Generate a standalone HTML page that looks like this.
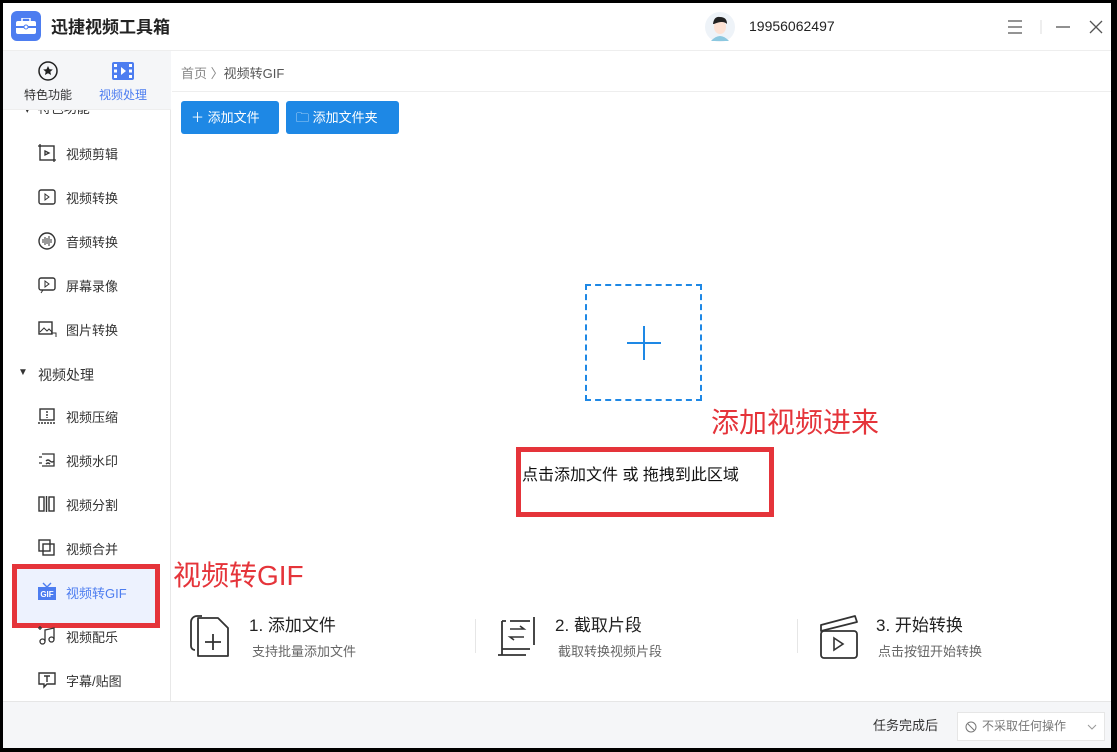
<!DOCTYPE html>
<html><head><meta charset="utf-8"><style>
*{margin:0;padding:0;box-sizing:border-box}
body{width:1117px;height:752px;background:#000;position:relative;overflow:hidden;font-family:"Liberation Sans","Noto Sans CJK SC",sans-serif;color:#333}
#app{position:absolute;left:3px;top:3px;width:1108px;height:745px;background:#fff}
.abs{position:absolute}
.nav{position:absolute;left:34px;font-size:13px;color:#333;display:flex;align-items:center}
.nav svg{position:absolute;left:0}
.nav span{position:absolute;left:29px;white-space:nowrap;top:-9px}
.red{border:5px solid #e5343a;position:absolute}
.ann{position:absolute;color:#e5343a;font-size:28px;white-space:nowrap}
</style></head><body><div id="app">
<div class="abs" style="left:8px;top:8px;width:30px;height:30px;border-radius:6px;background:#4d7df0"></div>
<svg class="abs" style="left:12px;top:15px" width="22" height="17"><rect x="1" y="3" width="20" height="13" rx="2" fill="#fff"/><rect x="7" y="0" width="8" height="4" fill="none" stroke="#fff" stroke-width="1.5"/><rect x="1" y="8" width="20" height="2" fill="#4d7df0"/><circle cx="11" cy="9" r="2" fill="#fff" stroke="#4d7df0"/></svg>
<div class="abs" style="left:48px;top:10px;font-size:17px;font-weight:bold;color:#222">迅捷视频工具箱</div>
<svg class="abs" style="left:702px;top:8px" width="30" height="32"><circle cx="15" cy="16" r="15" fill="#eef3f8"/><path d="M6 30 Q15 20 24 30Z" fill="#8cc8e0"/><ellipse cx="15" cy="16" rx="6" ry="7" fill="#fde2d4"/><path d="M8 13 Q9 5 15 6 Q22 6 22 13 Q18 9 9 13Z" fill="#222"/></svg>
<div class="abs" style="left:746px;top:15px;font-size:14px;color:#222">19956062497</div>
<svg class="abs" style="left:1003px;top:15px" width="100" height="18"><path d="M2 3H16M2 9H16M2 15H16" stroke="#555" stroke-width="1.3"/><path d="M35 2V16" stroke="#ddd"/><path d="M50 9H64" stroke="#555" stroke-width="1.3"/><path d="M84 3L96 15M96 3L84 15" stroke="#555" stroke-width="1.3"/></svg>
<div class="abs" style="left:0;top:47px;width:1108px;height:1px;background:#eee"></div>
<div class="abs" style="left:0;top:48px;width:168px;height:650px;border-right:1px solid #e8e8e8"></div>
<div class="abs" style="left:0;top:48px;width:168px;height:58px;background:#f5f6f8"></div>
<div class="abs" style="left:21px;top:106px;font-size:13px;color:#333;height:8px;overflow:hidden;line-height:0px">▾&nbsp;&nbsp;特色功能</div>
<svg class="abs" style="left:35px;top:58px" width="20" height="20"><circle cx="10" cy="10" r="9" fill="none" stroke="#222" stroke-width="1.5"/><path d="M10 5l1.5 3.2 3.3.3-2.5 2.2.8 3.3-3.1-1.8-3.1 1.8.8-3.3-2.5-2.2 3.3-.3z" fill="#222"/></svg>
<div class="abs" style="left:21px;top:83px;font-size:12px;color:#333">特色功能</div>
<svg class="abs" style="left:109px;top:59px" width="22" height="18"><rect width="22" height="18" rx="2" fill="#4d7df0"/><rect x="2" y="2" width="3" height="3" fill="#fff"/><rect x="2" y="7.5" width="3" height="3" fill="#fff"/><rect x="2" y="13" width="3" height="3" fill="#fff"/><rect x="17" y="2" width="3" height="3" fill="#fff"/><rect x="17" y="7.5" width="3" height="3" fill="#fff"/><rect x="17" y="13" width="3" height="3" fill="#fff"/><path d="M9 5l5 4-5 4z" fill="#fff"/></svg>
<div class="abs" style="left:96px;top:83px;font-size:12px;color:#4d7df0">视频处理</div>
<div class="abs" style="left:0;top:106px;width:168px;height:1px;background:#eee"></div>

<div class="nav" style="top:150px"><svg width="20" height="20"><rect x="3" y="3" width="14" height="14" fill="none" stroke="#333" stroke-width="1.4"/><path d="M1 3h3M16 17h3M3 1v3M17 16v3M8 8l4 2-4 2z" stroke="#333" stroke-width="1.3" fill="none"/></svg><span>视频剪辑</span></div>
<div class="nav" style="top:194px"><svg width="20" height="20"><rect x="2" y="3" width="16" height="14" rx="2" fill="none" stroke="#333" stroke-width="1.4"/><path d="M8 7l4 3-4 3z" fill="none" stroke="#333"/></svg><span>视频转换</span></div>
<div class="nav" style="top:238px"><svg width="20" height="20"><circle cx="10" cy="10" r="8" fill="none" stroke="#333" stroke-width="1.4"/><path d="M6 8v4M8 6v8M10 7v6M12 5v10M14 8v4" stroke="#333"/></svg><span>音频转换</span></div>
<div class="nav" style="top:282px"><svg width="20" height="20"><rect x="2" y="3" width="16" height="12" rx="2" fill="none" stroke="#333" stroke-width="1.4"/><path d="M8 6l4 3-4 3zM6 15l-2 3" stroke="#333" fill="none"/></svg><span>屏幕录像</span></div>
<div class="nav" style="top:326px"><svg width="20" height="20"><rect x="2" y="3" width="13" height="12" fill="none" stroke="#333" stroke-width="1.4"/><path d="M3 13l4-4 3 3 2-2 3 3M14 14h5v4" stroke="#333" fill="none"/></svg><span>图片转换</span></div>
<div class="abs" style="left:15px;top:364px;font-size:10px;color:#333">▼</div>
<div class="abs" style="left:35px;top:362px;font-size:14px;color:#333">视频处理</div>
<div class="nav" style="top:413px"><svg width="20" height="20"><rect x="3" y="3" width="14" height="11" fill="none" stroke="#333" stroke-width="1.4"/><path d="M1 17h18M10 5v7" stroke="#333" stroke-width="1.4" stroke-dasharray="2 1"/></svg><span>视频压缩</span></div>
<div class="nav" style="top:457px"><svg width="20" height="20"><path d="M5 4h12v12H5M2 7h3M2 13h3M9 11q2-2 4 0t4 0M9 14q2-2 4 0" stroke="#333" stroke-width="1.3" fill="none"/></svg><span>视频水印</span></div>
<div class="nav" style="top:501px"><svg width="20" height="20"><rect x="2" y="3" width="5" height="14" fill="none" stroke="#333" stroke-width="1.4"/><rect x="12" y="3" width="5" height="14" fill="none" stroke="#333" stroke-width="1.4"/><path d="M9.5 2v16" stroke="#333" stroke-width="1.4"/></svg><span>视频分割</span></div>
<div class="nav" style="top:545px"><svg width="20" height="20"><rect x="2" y="2" width="11" height="11" fill="none" stroke="#333" stroke-width="1.4"/><rect x="6" y="6" width="11" height="11" fill="none" stroke="#333" stroke-width="1.4"/></svg><span>视频合并</span></div>
<div class="abs" style="left:12px;top:563px;width:140px;height:58px;background:#edf2fe"></div>
<div class="red" style="left:9px;top:561px;width:148px;height:64px"></div>
<div class="nav" style="top:589px"><svg width="20" height="20"><path d="M6 1l4 4 4-4" stroke="#4d7df0" fill="none" stroke-width="1.4"/><rect x="1" y="5" width="18" height="13" fill="#4d7df0"/><text x="10" y="15" font-size="8" font-weight="bold" fill="#fff" text-anchor="middle" font-family="Liberation Sans">GIF</text></svg><span style="color:#4d7df0">视频转GIF</span></div>
<div class="nav" style="top:633px"><svg width="20" height="20"><path d="M8 15V4l9-2v11M1 2h4M3 0v4" stroke="#333" stroke-width="1.3" fill="none"/><circle cx="5.5" cy="15.5" r="2.5" fill="none" stroke="#333" stroke-width="1.3"/><circle cx="14.5" cy="13.5" r="2.5" fill="none" stroke="#333" stroke-width="1.3"/></svg><span>视频配乐</span></div>
<div class="nav" style="top:677px"><svg width="20" height="20"><path d="M2 3h16v11h-8l-3 3v-3H2z" stroke="#333" stroke-width="1.4" fill="none"/><path d="M7 6h6M10 6v6" stroke="#333" stroke-width="1.4"/></svg><span>字幕/贴图</span></div>

<div class="abs" style="left:178px;top:60px;font-size:13px;color:#888">首页 〉<span style="color:#555">视频转GIF</span></div>
<div class="abs" style="left:169px;top:88px;width:939px;height:1px;background:#eee"></div>
<div class="abs" style="left:178px;top:98px;width:98px;height:33px;background:#1e88e5;border-radius:3px;color:#fff;font-size:13px;line-height:33px;padding-left:10px">＋&nbsp;添加文件</div>
<div class="abs" style="left:283px;top:98px;width:113px;height:33px;background:#1e88e5;border-radius:3px;color:#fff;font-size:13px;line-height:33px;padding-left:10px">🗀&nbsp;添加文件夹</div>
<div class="abs" style="left:582px;top:281px;width:117px;height:117px;border:2px dashed #1e88e5"></div>
<svg class="abs" style="left:622px;top:321px" width="38" height="38"><path d="M19 2v34M2 19h34" stroke="#1e88e5" stroke-width="2"/></svg>
<div class="ann" style="left:708px;top:398px">添加视频进来</div>
<div class="red" style="left:513px;top:444px;width:258px;height:70px"></div>
<div class="abs" style="left:519px;top:458px;font-size:16px;color:#111">点击添加文件 或 拖拽到此区域</div>
<div class="ann" style="left:170px;top:551px">视频转GIF</div>

<svg class="abs" style="left:185px;top:607px" width="50" height="50"><path d="M14 6h-5a6 6 0 0 0-6 6v24a4 4 0 0 0 4 4" stroke="#333" stroke-width="1.8" fill="none"/><path d="M10 8h20l10 10v28H10z" stroke="#333" stroke-width="1.8" fill="none" stroke-linejoin="round"/><path d="M25 24v16M17 32h16" stroke="#333" stroke-width="1.8"/></svg>
<div class="abs" style="left:246px;top:608px;font-size:17px;color:#222">1. 添加文件</div>
<div class="abs" style="left:249px;top:638px;font-size:13px;color:#666">支持批量添加文件</div>
<div class="abs" style="left:472px;top:616px;width:1px;height:34px;background:#e6e6e6"></div>
<svg class="abs" style="left:493px;top:610px" width="46" height="46"><path d="M6 8v34M2 42h28M38 4v28M14 8h20" stroke="#333" stroke-width="1.8" fill="none"/><path d="M6 8h4M34 36H6" stroke="#333" stroke-width="1.8"/><path d="M14 16h14l-4-3M28 24H14l4 3" stroke="#333" stroke-width="1.6" fill="none"/></svg>
<div class="abs" style="left:552px;top:608px;font-size:17px;color:#222">2. 截取片段</div>
<div class="abs" style="left:555px;top:638px;font-size:13px;color:#666">截取转换视频片段</div>
<div class="abs" style="left:794px;top:616px;width:1px;height:34px;background:#e6e6e6"></div>
<svg class="abs" style="left:814px;top:610px" width="46" height="48"><path d="M4 18l36-9-2-6L4 12z" stroke="#333" stroke-width="1.8" fill="none" stroke-linejoin="round"/><rect x="4" y="18" width="36" height="27" rx="3" stroke="#333" stroke-width="1.8" fill="none"/><path d="M17 25l9 6-9 6z" stroke="#333" stroke-width="1.6" fill="none"/></svg>
<div class="abs" style="left:873px;top:608px;font-size:17px;color:#222">3. 开始转换</div>
<div class="abs" style="left:875px;top:638px;font-size:13px;color:#666">点击按钮开始转换</div>

<div class="abs" style="left:0;top:698px;width:1108px;height:47px;background:#f5f6f8;border-top:1px solid #e6e6e6"></div>
<div class="abs" style="left:870px;top:712px;font-size:13px;color:#333">任务完成后</div>
<div class="abs" style="left:954px;top:709px;width:148px;height:29px;background:#fff;border:1px solid #e6e6e6;font-size:12px;color:#777;line-height:27px;padding-left:24px"><svg class="abs" style="left:7px;top:8px" width="12" height="12"><circle cx="6" cy="6" r="5" fill="none" stroke="#777"/><path d="M3 3l6 6" stroke="#777"/></svg>不采取任何操作<svg class="abs" style="right:7px;top:11px" width="10" height="6"><path d="M1 1l4 4 4-4" stroke="#999" fill="none"/></svg></div>
</div></body></html>
